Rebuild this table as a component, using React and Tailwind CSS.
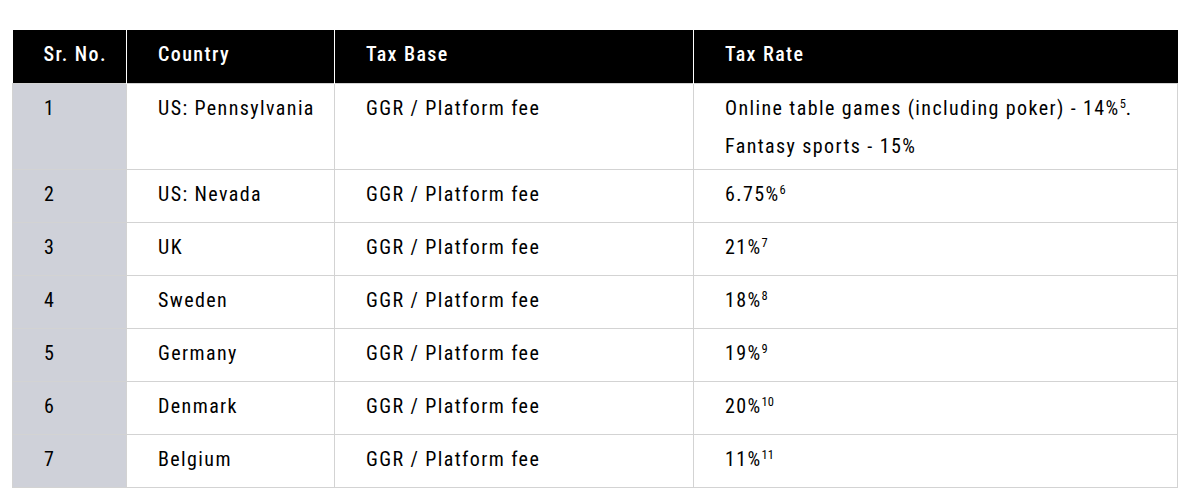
const rows = [
  { no: '1', country: 'US: Pennsylvania', base: 'GGR / Platform fee', rate: null },
  { no: '2', country: 'US: Nevada', base: 'GGR / Platform fee', rate: ['6.75%', '6'] },
  { no: '3', country: 'UK', base: 'GGR / Platform fee', rate: ['21%', '7'] },
  { no: '4', country: 'Sweden', base: 'GGR / Platform fee', rate: ['18%', '8'] },
  { no: '5', country: 'Germany', base: 'GGR / Platform fee', rate: ['19%', '9'] },
  { no: '6', country: 'Denmark', base: 'GGR / Platform fee', rate: ['20%', '10'] },
  { no: '7', country: 'Belgium', base: 'GGR / Platform fee', rate: ['11%', '11'] },
];

const font = "font-['Liberation_Sans_Narrow','Roboto_Condensed','Liberation_Sans',sans-serif]";

function Sup({ children }) {
  return (
    <sup className="relative -top-[7px] align-baseline text-[12.5px] leading-none tracking-normal">
      {children}
    </sup>
  );
}

const th = 'whitespace-nowrap pl-[31px] pr-0 pb-[10px] pt-[5px] text-left align-top font-medium';
const td = 'whitespace-nowrap border border-[#d3d3d3] pl-[31px] pr-0 pt-[5px] align-top';

export default function App() {
  return (
    <div className={`min-h-[504px] w-[1200px] bg-white pl-[12px] pt-[30px] ${font}`}>
      <table className="w-[1165px] table-fixed border-collapse text-[20px] leading-[38px] tracking-[1.4px] text-black">
        <colgroup>
          <col className="w-[114px]" />
          <col className="w-[208px]" />
          <col className="w-[359px]" />
          <col className="w-[484px]" />
        </colgroup>
        <thead>
          <tr className="h-[53px] bg-black text-white">
            <th className={`${th} border-r border-white`}>Sr. No.</th>
            <th className={`${th} border-r border-white`}>Country</th>
            <th className={`${th} border-r border-white`}>Tax Base</th>
            <th className={th}>Tax Rate</th>
          </tr>
        </thead>
        <tbody>
          {rows.map((r) => (
            <tr key={r.no} className={r.rate ? 'h-[53px]' : 'h-[86px]'}>
              <td className={`${td} bg-[#cfd1d9]`}>{r.no}</td>
              <td className={td}>{r.country}</td>
              <td className={td}>{r.base}</td>
              <td className={td}>
                {r.rate ? (
                  <span>
                    {r.rate[0]}
                    <Sup>{r.rate[1]}</Sup>
                  </span>
                ) : (
                  <>
                    <div>
                      Online table games (including poker) - 14%<Sup>5</Sup>.
                    </div>
                    <div>Fantasy sports - 15%</div>
                  </>
                )}
              </td>
            </tr>
          ))}
        </tbody>
      </table>
    </div>
  );
}
